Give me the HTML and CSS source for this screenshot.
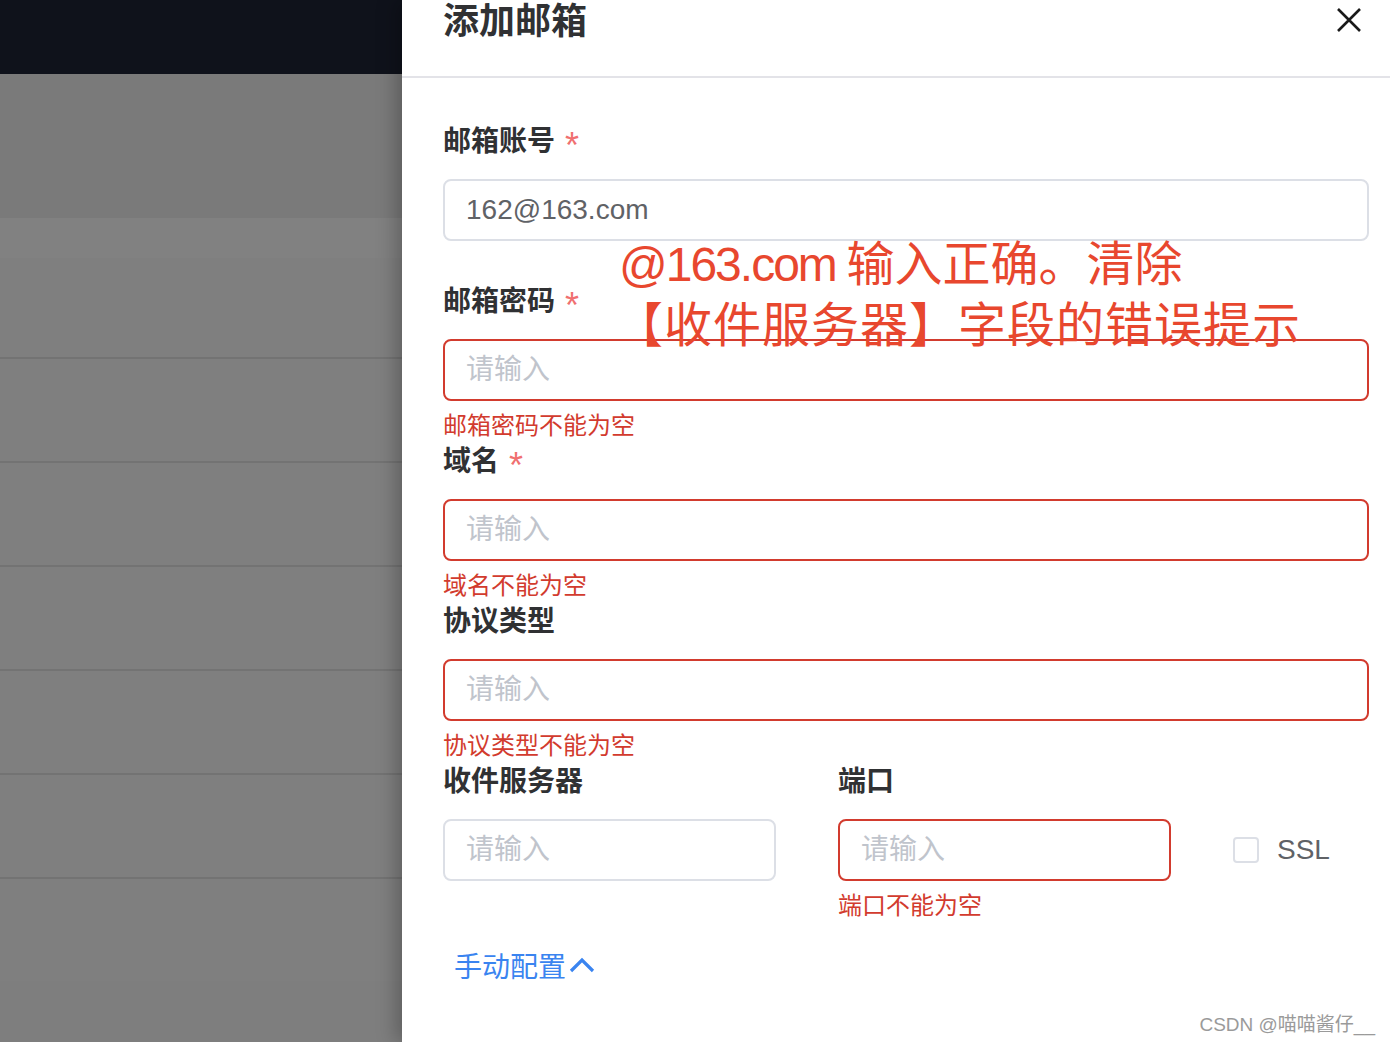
FILE: index.html
```html
<!DOCTYPE html>
<html lang="zh-CN">
<head>
  <meta charset="UTF-8">
  <meta name="viewport" content="width=device-width, initial-scale=1.0">
  <title>添加邮箱</title>
  <link rel="stylesheet" href="styles.css">
</head>
<body>
  <div class="page">
    <div class="backdrop">
      <div class="topbar"></div>
      <div class="band band-a"></div>
      <div class="band band-b"></div>
      <div class="band band-c"></div>
      <div class="row"></div>
      <div class="row"></div>
      <div class="row"></div>
      <div class="row"></div>
      <div class="row"></div>
      <div class="row"></div>
    </div>

    <aside class="drawer">
      <header class="drawer-header">
        <h2 class="drawer-title">添加邮箱</h2>
        <button class="close" type="button" aria-label="关闭">
          <svg width="26" height="26" viewBox="0 0 26 26"><path d="M2 2 L24 24 M24 2 L2 24" stroke="#1a1a1a" stroke-width="2.6" fill="none"/></svg>
        </button>
      </header>

      <form class="drawer-body">
        <div class="form-item">
          <label class="form-label required">邮箱账号</label>
          <div class="form-control">
            <input class="input" type="text" value="162@163.com">
          </div>
        </div>

        <div class="form-item">
          <label class="form-label required">邮箱密码</label>
          <div class="form-control">
            <input class="input is-error" type="password" placeholder="请输入">
            <div class="form-error">邮箱密码不能为空</div>
          </div>
        </div>

        <div class="form-item">
          <label class="form-label required">域名</label>
          <div class="form-control">
            <input class="input is-error" type="text" placeholder="请输入">
            <div class="form-error">域名不能为空</div>
          </div>
        </div>

        <div class="form-item">
          <label class="form-label">协议类型</label>
          <div class="form-control">
            <input class="input is-error" type="text" placeholder="请输入">
            <div class="form-error">协议类型不能为空</div>
          </div>
        </div>

        <div class="form-row">
          <div class="form-item">
            <label class="form-label">收件服务器</label>
            <div class="form-control">
              <input class="input" type="text" placeholder="请输入">
            </div>
          </div>
          <div class="form-item">
            <label class="form-label">端口</label>
            <div class="form-control">
              <input class="input is-error" type="text" placeholder="请输入">
              <div class="form-error">端口不能为空</div>
            </div>
          </div>
          <div class="form-item">
            <div class="form-label"></div>
            <label class="checkbox">
              <span class="checkbox-box"></span>
              <span class="checkbox-text">SSL</span>
            </label>
          </div>
        </div>

        <a class="toggle-link" href="#">手动配置<svg width="26" height="18" viewBox="0 0 26 18"><path d="M2 15 L13 4 L24 15" stroke="#3a84f0" stroke-width="3.2" fill="none"/></svg></a>
      </form>

      <div class="note">
        <div><span class="latin">@163.com</span> 输入正确。清除</div>
        <div class="note-line2">【收件服务器】字段的错误提示</div>
      </div>
    </aside>
  </div>

  <div class="watermark">CSDN @喵喵酱仔__</div>
</body>
</html>
```

FILE: styles.css
```css
body {
  margin: 0;
  font-family: "Liberation Sans", "Noto Sans CJK SC", sans-serif;
  color: #303133;
  overflow: hidden;
}
.page {
  display: flex;
  height: 1042px;
}

/* masked page behind the drawer */
.backdrop {
  width: 402px;
  flex-shrink: 0;
  background: #7e7e7e;
}
.topbar {
  height: 74px;
  background: #0f121b;
}
.band-a {
  height: 144px;
  background: #7a7a7a;
}
.band-b {
  height: 40px;
  background: #818181;
}
.band-c {
  height: 99px;
  background: #7f7f7f;
}
.row {
  height: 102px;
  border-top: 2px solid #737373;
  background: #7f7f7f;
}

.drawer {
  position: relative;
  flex: 1;
  background: #fff;
  box-shadow: -6px 0 18px rgba(0,0,0,0.25);
}
.drawer-header {
  display: flex;
  justify-content: space-between;
  align-items: flex-start;
  height: 76px;
  padding: 0 28px 0 41px;
  border-bottom: 2px solid #e3e3e8;
}
.drawer-title {
  margin: 0;
  font-size: 36px;
  line-height: 44px;
  font-weight: bold;
  color: #303133;
}
.close {
  margin-top: 7px;
  padding: 0;
  border: 0;
  background: none;
  cursor: pointer;
}

.drawer-body {
  padding: 42px 21px 0 41px;
}
.form-item {
  margin-bottom: 39px;
}
.form-label {
  display: block;
  height: 40px;
  line-height: 44px;
  margin-bottom: 19px;
  font-size: 28px;
  font-weight: bold;
  color: #303133;
}
.form-label.required::after {
  content: "*";
  margin-left: 10px;
  font-size: 36px;
  color: #f07070;
  font-weight: normal;
  vertical-align: -7px;
}
.form-control {
  position: relative;
}
.input {
  display: block;
  width: 100%;
  height: 62px;
  box-sizing: border-box;
  padding: 0 21px;
  border: 2px solid #dcdfe6;
  border-radius: 8px;
  font-family: "Liberation Sans", "Noto Sans CJK SC", sans-serif;
  font-size: 28px;
  color: #606266;
  outline: none;
}
.input::placeholder {
  color: #c0c4cc;
}
.input.is-error {
  border-color: #d23b2e;
}
.form-error {
  position: absolute;
  top: calc(100% + 13px);
  left: 0;
  font-size: 24px;
  line-height: 24px;
  color: #d23b2e;
}

.form-row {
  display: grid;
  grid-template-columns: 333px 333px 1fr;
  column-gap: 62px;
}
.checkbox {
  display: flex;
  align-items: center;
  gap: 18px;
  height: 62px;
}
.checkbox-box {
  width: 26px;
  height: 26px;
  box-sizing: border-box;
  border: 2px solid #dcdfe6;
  border-radius: 4px;
}
.checkbox-text {
  font-size: 28px;
  color: #606266;
}

.toggle-link {
  display: inline-flex;
  align-items: center;
  gap: 3px;
  margin-top: 25px;
  padding-left: 11px;
  height: 40px;
  font-size: 28px;
  color: #3a84f0;
  text-decoration: none;
}

.note {
  position: absolute;
  left: 217px;
  top: 232px;
  font-family: "Noto Sans CJK SC", sans-serif;
  font-size: 48px;
  line-height: 56px;
  color: #e8472e;
  white-space: nowrap;
}
.note .latin {
  font-family: "Liberation Sans", sans-serif;
  letter-spacing: -2px;
}
.note-line2 {
  margin-left: -4px;
  letter-spacing: 1px;
}

.watermark {
  position: absolute;
  right: 15px;
  bottom: 6px;
  font-size: 19px;
  color: #9a9a9a;
  text-shadow: 0 0 2px #fff;
}
```
